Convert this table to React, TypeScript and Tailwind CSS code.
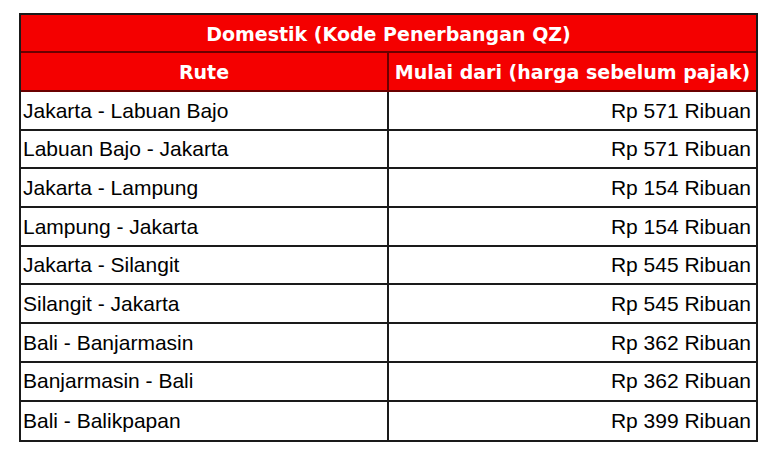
const rows: [string, string][] = [
  ["Jakarta - Labuan Bajo", "Rp 571 Ribuan"],
  ["Labuan Bajo - Jakarta", "Rp 571 Ribuan"],
  ["Jakarta - Lampung", "Rp 154 Ribuan"],
  ["Lampung - Jakarta", "Rp 154 Ribuan"],
  ["Jakarta - Silangit", "Rp 545 Ribuan"],
  ["Silangit - Jakarta", "Rp 545 Ribuan"],
  ["Bali - Banjarmasin", "Rp 362 Ribuan"],
  ["Banjarmasin - Bali", "Rp 362 Ribuan"],
  ["Bali - Balikpapan", "Rp 399 Ribuan"],
]

export default function App() {
  return (
    <div className="h-[462px] w-[775px] bg-white pl-[19px] pt-[13px]">
      <div className="w-[739px] border-2 border-[#1a1a1a]">
        <div className="flex h-[38px] items-center justify-center border-b-2 border-[#6b0000] bg-[#f40000] pt-[2px] font-['DejaVu_Sans',sans-serif] text-[19px] font-bold text-white">
          Domestik (Kode Penerbangan QZ)
        </div>
        <div className="grid h-[39px] grid-cols-[368px_1fr] border-b-2 border-[#6b0000] bg-[#f40000] font-['DejaVu_Sans',sans-serif] text-[19px] font-bold text-white">
          <div className="flex items-center justify-center border-r-2 border-[#6b0000] pt-[2px]">Rute</div>
          <div className="flex items-center justify-center pt-[2px]">Mulai dari (harga sebelum pajak)</div>
        </div>
        {rows.map(([route, price], i) => (
          <div
            key={i}
            className={`grid h-[38.7px] grid-cols-[368px_1fr] font-['Liberation_Sans',Arial,sans-serif] text-[21px] text-black ${
              i < rows.length - 1 ? "border-b-2 border-[#1a1a1a]" : ""
            }`}
          >
            <div className="flex items-center border-r-2 border-[#1a1a1a] pl-[2px]">{route}</div>
            <div className="flex items-center justify-end pr-[5px]">{price}</div>
          </div>
        ))}
      </div>
    </div>
  )
}
